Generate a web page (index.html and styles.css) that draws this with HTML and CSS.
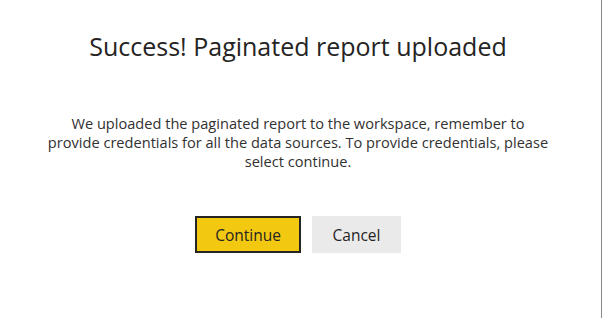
FILE: index.html
```html
<!DOCTYPE html>
<html lang="en">

<head>
    <meta charset="UTF-8">
    <meta name="viewport" content="width=device-width, initial-scale=1.0">
    <title>Upload complete</title>
    <link rel="stylesheet" href="styles.css">
</head>

<body>
    <div class="dialog">
        <h1 class="dialog-title">Success! Paginated report uploaded</h1>
        <p class="dialog-text">We uploaded the paginated report to the workspace, remember to<br>provide credentials for all the data sources. To provide credentials, please select continue.</p>
        <div class="buttons">
            <button class="btn btn-primary">Continue</button>
            <button class="btn btn-secondary">Cancel</button>
        </div>
    </div>
</body>

</html>
```

FILE: styles.css
```css
* {
    box-sizing: border-box;
}
body {
    margin: 0;
    background-color: #fff;
    font-family: "Open Sans", "Noto Sans", sans-serif;
    color: #252423;
}
.dialog {
    width: 602px;
    height: 318px;
    border-right: 1px solid #8a8a8a;
    padding: 29px 54px 0 49px;
    text-align: center;
}
.dialog-title {
    margin: 0;
    font-size: 25px;
    font-weight: 400;
    line-height: 34px;
}
.dialog-text {
    margin: 51px -12px 0;
    font-size: 14.6px;
    line-height: 19px;
    color: #323130;
}
.buttons {
    display: flex;
    justify-content: center;
    gap: 11px;
    margin-top: 45px;
}
.btn {
    height: 37px;
    font-family: inherit;
    font-size: 15.5px;
    color: #252423;
    border: none;
    padding: 0;
}
.btn-primary {
    width: 106px;
    background: #f2c811;
    border: 2px solid #252423;
}
.btn-secondary {
    width: 89px;
    background: #eaeaea;
}
```
